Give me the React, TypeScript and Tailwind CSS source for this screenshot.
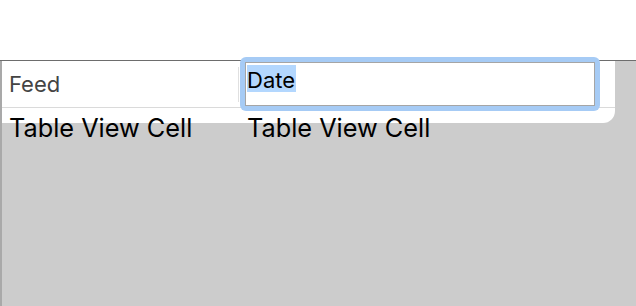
export default function App() {
  return (
    <div className="flex h-[306px] w-[636px] flex-col overflow-hidden bg-white font-['Inter','Liberation_Sans',sans-serif]">
      {/* window chrome area */}
      <div className="h-[60px] shrink-0 bg-white" />
      <div className="h-px shrink-0 bg-[#6d6d6d]" />

      {/* table area */}
      <div className="flex-1 border-l-2 border-[#a9a9a9] bg-[#cccccc]">
        <div className="h-[62px] w-[613px] rounded-br-[12px] bg-white">
          {/* header row */}
          <div className="flex h-[47px] items-start border-b border-[#dadada]">
            <div className="w-[236px] pl-[7px] pt-[10px] text-[22px] leading-[26px] text-[#444444]">
              Feed
            </div>
            <div className="mt-[6px] h-[35px] w-px bg-[#e0e0e0]" />
            <div className="ml-px -mt-[4px] relative z-10 h-[54px] w-[360px] rounded-[6px] bg-[#a6cbf5] p-[5px]">
              <div className="h-full w-full border border-[#a5a5a5] bg-white pl-px pt-[2px]">
                <span className="inline-block h-[27px] bg-[#b3d7fe] pr-px text-[22px] leading-[30px] text-black">
                  Date
                </span>
              </div>
            </div>
          </div>
        </div>

        {/* first row */}
        <div className="relative -mt-[10px] flex text-[25.3px] leading-[30px] text-black">
          <div className="w-[238px] pl-[7px]">Table View Cell</div>
          <div className="pl-[7px]">Table View Cell</div>
        </div>
      </div>
    </div>
  );
}
